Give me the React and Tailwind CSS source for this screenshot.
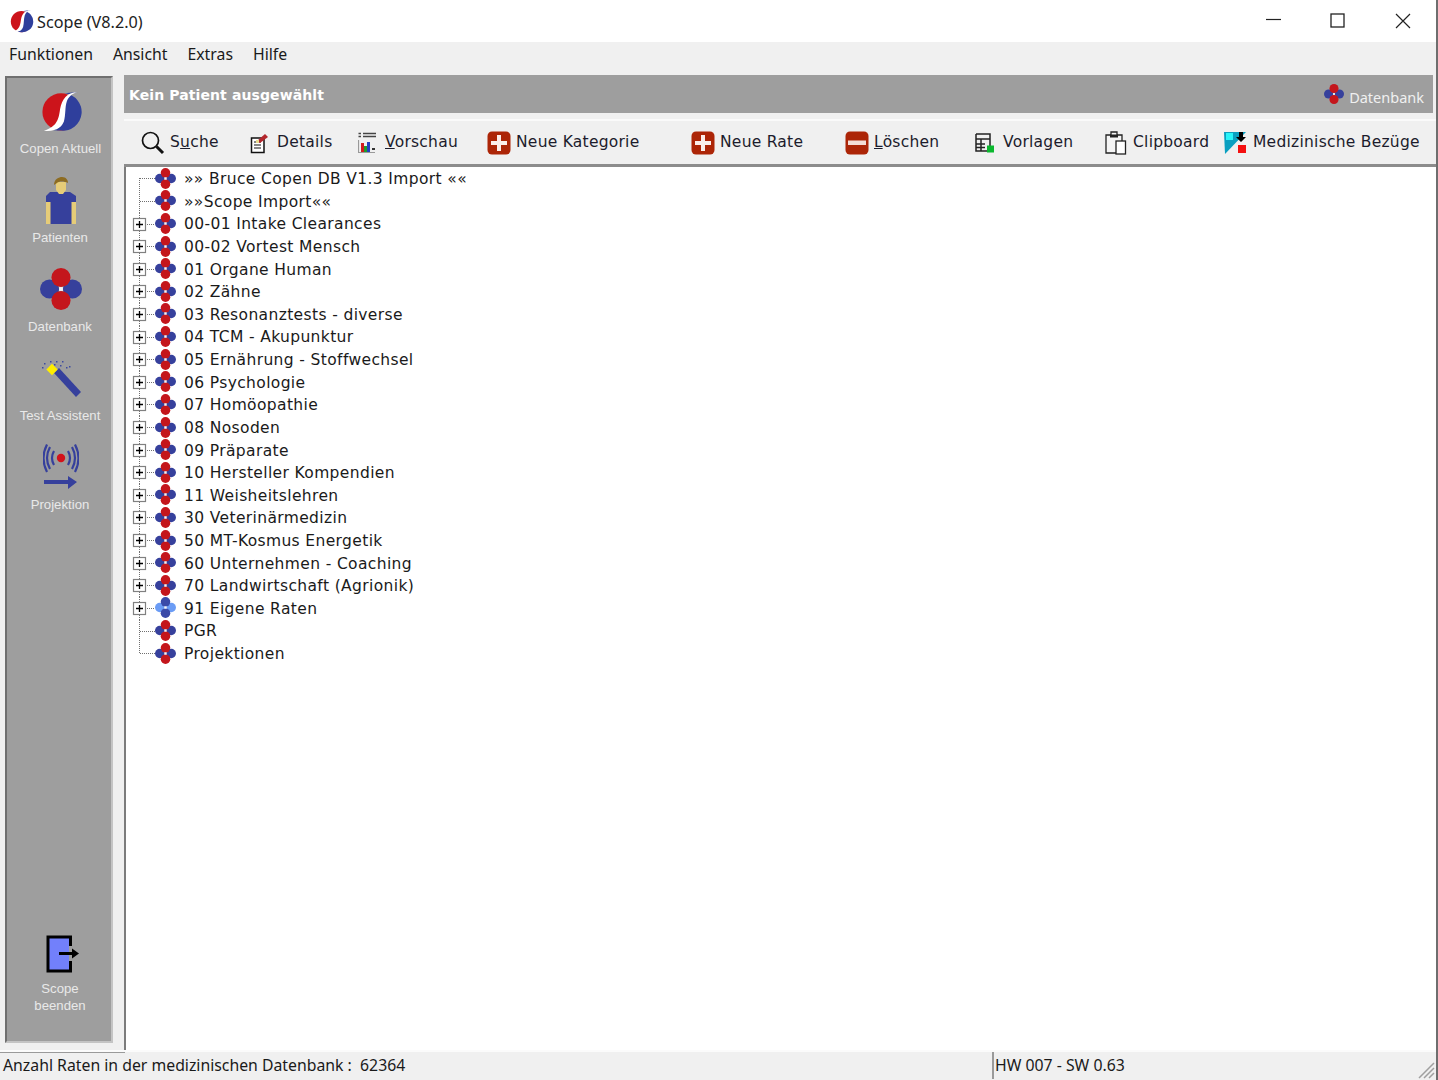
import React from 'react';

const treeRows = [
  { label: '»» Bruce Copen DB V1.3 Import ««', leaf: true, first: true },
  { label: '»»Scope Import««', leaf: true },
  { label: '00-01 Intake Clearances' },
  { label: '00-02 Vortest Mensch' },
  { label: '01 Organe Human' },
  { label: '02 Zähne' },
  { label: '03 Resonanztests - diverse' },
  { label: '04 TCM - Akupunktur' },
  { label: '05 Ernährung - Stoffwechsel' },
  { label: '06 Psychologie' },
  { label: '07 Homöopathie' },
  { label: '08 Nosoden' },
  { label: '09 Präparate' },
  { label: '10 Hersteller Kompendien' },
  { label: '11 Weisheitslehren' },
  { label: '30 Veterinärmedizin' },
  { label: '50 MT-Kosmus Energetik' },
  { label: '60 Unternehmen - Coaching' },
  { label: '70 Landwirtschaft (Agrionik)' },
  { label: '91 Eigene Raten', light: true },
  { label: 'PGR', leaf: true },
  { label: 'Projektionen', leaf: true, last: true },
];

const Clover = ({ size = 21, light = false, className = '' }) => (
  <svg width={size} height={size} viewBox="0 0 22 22" className={`shrink-0 ${className}`}>
    <circle cx="5" cy="11" r="5" fill={light ? '#6b9cf5' : '#36409c'} />
    <circle cx="17" cy="11" r="5" fill={light ? '#6b9cf5' : '#36409c'} />
    <circle cx="11" cy="5" r="5" fill={light ? '#3a4aa8' : '#c4161c'} />
    <circle cx="11" cy="17" r="5" fill={light ? '#3a4aa8' : '#c4161c'} />
    <rect x="10" y="10" width="2" height="2" fill="#f4f4f4" />
  </svg>
);

const LogoMark = ({ size }) => (
  <svg width={size} height={size} viewBox="0 0 44 44" className="shrink-0">
    <circle cx="21" cy="23" r="19.500" fill="#cc141b" />
    <path d="M25 3.500 A19.500 19.500 0 0 1 21 42.500 C16 42.500 12 42 10 41 C22 38 21 30 22 22 C23 12 26 5 38 2 Z" fill="#2f3f9c" />
    <path d="M38 2 C27 3 22 9 20 20 C18.500 31 17 38 3 43 C14 43 21 41 24 33 C26 26 25 18 27 12 C29 7 32 4 38 2 Z" fill="#fff" />
  </svg>
);

const PersonIcon = () => (
  <svg width="32" height="48" viewBox="0 0 32 48">
    <path d="M5 16 L25 16 L31 20 L31 48 L1 48 L1 20 Z" fill="#36409c" />
    <rect x="1" y="26" width="4.500" height="22" fill="#e6cc78" />
    <rect x="26.500" y="26" width="4.500" height="22" fill="#e6cc78" />
    <path d="M11 6 H21 V14 L18 18 H14 L11 14 Z" fill="#e6cc78" />
    <path d="M9 9 C9 3 14 1 17 1 C21 1 23 4 23 7 C19 5 14 5 12 7 Z" fill="#8d6c22" />
  </svg>
);

const WandIcon = () => (
  <svg width="42" height="42" viewBox="0 0 42 42">
    <path d="M13 12 L18 7 L40 31 L35 36 Z" fill="#36409c" />
    <rect x="7" y="4.500" width="8" height="8" transform="rotate(45 11 8.500)" fill="#ffee00" />
    <g fill="#3d4aa0">
      <rect x="3" y="2" width="1.500" height="1.500" />
      <rect x="9" y="0" width="1.500" height="1.500" />
      <rect x="15" y="0" width="1.500" height="1.500" />
      <rect x="21" y="0" width="1.500" height="1.500" />
      <rect x="19" y="4" width="1.500" height="1.500" />
      <rect x="25" y="6" width="1.500" height="1.500" />
      <rect x="13" y="3" width="1.500" height="1.500" />
      <rect x="1" y="6" width="1.500" height="1.500" />
      <rect x="28" y="5" width="1.500" height="1.500" />
    </g>
  </svg>
);

const ProjectionIcon = () => (
  <svg width="36" height="46" viewBox="0 0 36 46">
    <circle cx="18" cy="14" r="4.200" fill="#d3121a" />
    <g fill="none" stroke="#36409c" strokeWidth="2.200">
      <path d="M11 7 Q7 14 11 21" />
      <path d="M7 3 Q1 14 7 25" />
      <path d="M4 0.500 Q-3 14 4 28" />
      <path d="M25 7 Q29 14 25 21" />
      <path d="M29 3 Q35 14 29 25" />
      <path d="M32 0.500 Q39 14 32 28" />
    </g>
    <path d="M1 36 H25 V32 L34 38 L25 45 V40 H1 Z" fill="#36409c" />
  </svg>
);

const ExitIcon = () => (
  <svg width="34" height="38" viewBox="0 0 34 38">
    <path d="M2 2 H23 V36 H2 Z" fill="#7280fb" />
    <path d="M24.500 11 V2 H2 V36 H24.500 V26" fill="none" stroke="#000" strokeWidth="3" />
    <rect x="13" y="17" width="15" height="3" fill="#000" />
    <path d="M26 13.500 L33 18.500 L26 23.500 Z" fill="#000" />
  </svg>
);

const SearchIcon = () => (
  <svg width="24" height="24" viewBox="0 0 24 24" className="shrink-0">
    <circle cx="9.500" cy="9.500" r="8" fill="none" stroke="#111" strokeWidth="1.700" />
    <path d="M15.500 15.500 L22 22" stroke="#111" strokeWidth="3" />
  </svg>
);

const PlusSquare = ({ minus = false, fill = '#ac2507' }) => (
  <svg width="24" height="24" viewBox="0 0 24 24" className="shrink-0">
    <rect x="0.500" y="0.500" width="23" height="23" rx="4.500" fill={fill} />
    {minus ? (
      <rect x="3" y="9.500" width="18" height="4.500" fill="#f4ddd6" />
    ) : (
      <path d="M10 4 H14 V10 H20 V14 H14 V20 H10 V14 H4 V10 H10 Z" fill="#fbeeea" />
    )}
  </svg>
);

const DetailsIcon = () => (
  <svg width="20" height="22" viewBox="0 0 20 22" className="shrink-0">
    <path d="M1.500 6 H14 V20.500 H1.500 Z" fill="#fff" stroke="#111" strokeWidth="1.500" />
    <path d="M4 10 H11 M4 13 H11 M4 16 H11" stroke="#111" strokeWidth="1.200" />
    <path d="M7 9 L15 2 L18 5 L10 11 Z" fill="#b3262c" />
    <rect x="6" y="8" width="3" height="3" fill="#e9dc92" />
  </svg>
);

const PreviewIcon = () => (
  <svg width="20" height="22" viewBox="0 0 20 22" className="shrink-0">
    <path d="M0.500 1.500 H3 M5 1.500 H18 M0.500 4.500 H3 M5 4.500 H18" stroke="#444" strokeWidth="1.300" />
    <path d="M0.500 8 V20.500 H17" fill="none" stroke="#999" strokeWidth="1.200" />
    <rect x="3" y="11" width="3" height="9" fill="#d11c1c" />
    <rect x="6" y="14" width="3" height="6" fill="#1f9d2b" />
    <rect x="9" y="10" width="3" height="10" fill="#2340c0" />
    <rect x="14" y="16" width="3" height="2" fill="#333" />
  </svg>
);

const TemplateIcon = () => (
  <svg width="20" height="20" viewBox="0 0 20 20" className="shrink-0">
    <path d="M1 1 H15 V14 M1 1 V18 H12 M1 6 H15 M1 11 H10 M1 14.500 H10 M6 6 V18" fill="none" stroke="#222" strokeWidth="1.500" />
    <rect x="12" y="12.500" width="7" height="7" fill="#0ab82e" />
  </svg>
);

const ClipboardIcon = () => (
  <svg width="22" height="24" viewBox="0 0 22 24" className="shrink-0">
    <path d="M1 4 H6 V1 H12 V4 H17 V22 H1 Z" fill="#f5f5f5" stroke="#222" strokeWidth="1.300" />
    <rect x="5" y="3.500" width="8" height="3" fill="#222" />
    <rect x="11" y="10" width="9.500" height="13" fill="#fff" stroke="#222" strokeWidth="1.300" />
  </svg>
);

const ReferenceIcon = () => (
  <svg width="24" height="24" viewBox="0 0 24 24" className="shrink-0">
    <path d="M0 1 H22 L1 23 Z" fill="#0a9fc0" />
    <rect x="2" y="2" width="7" height="7" fill="#28f4f8" />
    <path d="M15 1 H19 V6 H22 L17 11 L12 6 H15 Z" fill="#000" />
    <rect x="14" y="14" width="8" height="8" fill="#f41010" />
  </svg>
);

const SideButton = ({ icon, label, iconClass, className }) => (
  <div className={`flex flex-col items-center text-[#e9e9e9] text-[13.2px] leading-[17px] font-['Liberation_Sans',sans-serif] ${className}`}>
    <div className={`flex items-center justify-center h-[58px] ${iconClass}`}>{icon}</div>
    {label}
  </div>
);

const ToolItem = ({ icon, width, gap = 'gap-[6px]', children }) => (
  <div className={`flex items-center shrink-0 ${gap} ${width}`}>
    {icon}
    <span className="whitespace-nowrap">{children}</span>
  </div>
);

const TreeLines = ({ leaf, first, last }) => (
  <svg width="29" height="23" viewBox="0 0 29 23" className="shrink-0 overflow-visible mb-[2px]">
    <path
      d={`M13.500 ${first ? 11 : 0} V${last ? 11 : 24}`}
      stroke="#707070"
      strokeWidth="1"
      strokeDasharray="1 1"
      fill="none"
    />
    <path d={`M${leaf ? 14 : 19} 11.500 H29`} stroke="#707070" strokeWidth="1" strokeDasharray="1 1" fill="none" />
    {!leaf && (
      <g>
        <rect x="7.500" y="5.500" width="12" height="12" fill="#fff" stroke="#808080" strokeWidth="1.200" />
        <path d="M10 11.500 H17 M13.500 8 V15" stroke="#000" strokeWidth="1.300" />
      </g>
    )}
  </svg>
);

export default function App() {
  return (
    <div className="w-[1438px] h-[1080px] flex flex-col overflow-hidden bg-[#f0f0f0] text-black border-r-2 border-[#6e6e6e]">
      {/* title bar */}
      <div className="h-[42px] shrink-0 bg-white flex items-center pl-[10px] font-['Noto_Sans',sans-serif] text-[16.2px] text-[#222]">
        <LogoMark size={24} />
        <span className="ml-[3px] pt-[2px]">Scope (V8.2.0)</span>
        <div className="ml-auto flex items-center">
          <svg width="16" height="16" viewBox="0 0 16 16" className="mr-[48px]">
            <path d="M0 6.500 H15" stroke="#222" strokeWidth="1.200" />
          </svg>
          <svg width="16" height="16" viewBox="0 0 16 16" className="mr-[49px]">
            <rect x="1" y="1" width="13" height="13" fill="none" stroke="#222" strokeWidth="1.300" />
          </svg>
          <svg width="16" height="16" viewBox="0 0 16 16" className="mr-[25px]">
            <path d="M1 1 L15 15 M15 1 L1 15" stroke="#222" strokeWidth="1.200" />
          </svg>
        </div>
      </div>

      {/* menu */}
      <div className="h-[26px] shrink-0 flex items-center gap-[20px] pl-[9px] font-['Noto_Sans',sans-serif] text-[15.8px] text-[#1a1a1a]">
        <span>Funktionen</span>
        <span>Ansicht</span>
        <span>Extras</span>
        <span>Hilfe</span>
      </div>

      <div className="flex-1 min-h-0 flex">
        {/* sidebar */}
        <div className="w-[124px] shrink-0 pt-[8px] pl-[5px] pb-[7px]">
          <div className="w-[108px] h-full flex flex-col bg-[#9e9e9e] border-2 border-t-[#6f6f6f] border-l-[#6f6f6f] border-r-[#c4c4c4] border-b-[#c4c4c4]">
            <SideButton className="h-[89px] pt-[4px] pl-[3px]" iconClass="ml-[2px]" icon={<LogoMark size={42} />} label="Copen Aktuell" />
            <SideButton className="h-[89px] pt-[4px] pl-[2px]" iconClass="ml-[2px]" icon={<PersonIcon />} label="Patienten" />
            <SideButton className="h-[89px] pt-[4px] pl-[2px]" iconClass="ml-[1px]" icon={<Clover size={42} />} label="Datenbank" />
            <SideButton className="h-[89px] pt-[4px] pl-[2px]" iconClass="ml-[3px] mt-[4px] -mb-[4px]" icon={<WandIcon />} label="Test Assistent" />
            <SideButton className="h-[89px] pt-[4px] pl-[2px]" iconClass="ml-[1px]" icon={<ProjectionIcon />} label="Projektion" />
            <SideButton
              className="mt-auto mb-[27px] pl-[2px]"
              iconClass="ml-[6px] mt-[3px] -mb-[3px]"
              icon={<ExitIcon />}
              label={
                <span className="text-center block">
                  Scope
                  <br />
                  beenden
                </span>
              }
            />
          </div>
        </div>

        {/* main */}
        <div className="flex-1 min-w-0 flex flex-col pt-[7px]">
          <div className="h-[38px] shrink-0 mr-[3px] bg-[#9e9e9e] flex items-center justify-between pl-[5px] pr-[9px] text-white">
            <span className="font-['DejaVu_Sans',sans-serif] font-bold text-[14px] tracking-[0.1px] pt-[3px]">Kein Patient ausgewählt</span>
            <div className="flex items-center gap-[5px] font-['Noto_Sans',sans-serif] text-[14.5px] text-[#f0f0f0]">
              <Clover size={20} />
              <span className="pt-[7px]">Datenbank</span>
            </div>
          </div>

          <div className="h-[6px] shrink-0" />
          <div className="h-[48px] shrink-0 border-t-2 border-[#fafafa] border-b-[3px] border-b-[#8c8c8c] flex items-center pl-[17px] pt-[1px] font-['DejaVu_Sans',sans-serif] text-[15.5px] tracking-[0.25px] text-[#1c1c2c]">
            <ToolItem width="w-[109px]" gap="gap-[5px]" icon={<SearchIcon />}>
              <span>S</span>
              <span className="underline">u</span>che
            </ToolItem>
            <ToolItem width="w-[108px]" gap="gap-[7px]" icon={<DetailsIcon />}>
              Details
            </ToolItem>
            <ToolItem width="w-[129px]" gap="gap-[7px]" icon={<PreviewIcon />}>
              <span className="underline">V</span>orschau
            </ToolItem>
            <ToolItem width="w-[204px]" gap="gap-[5px]" icon={<PlusSquare />}>
              Neue Kategorie
            </ToolItem>
            <ToolItem width="w-[154px]" gap="gap-[5px]" icon={<PlusSquare />}>
              Neue Rate
            </ToolItem>
            <ToolItem width="w-[130px]" gap="gap-[5px]" icon={<PlusSquare minus />}>
              <span className="underline">L</span>öschen
            </ToolItem>
            <ToolItem width="w-[130px]" gap="gap-[8px]" icon={<TemplateIcon />}>
              Vorlagen
            </ToolItem>
            <ToolItem width="w-[119px]" gap="gap-[6px]" icon={<ClipboardIcon />}>
              Clipboard
            </ToolItem>
            <ToolItem width="w-[200px]" gap="gap-[5px]" icon={<ReferenceIcon />}>
              Medizinische Bezüge
            </ToolItem>
          </div>

          {/* tree */}
          <div className="flex-1 min-h-0 bg-white border-l-2 border-[#7c7c7c] pt-[1.5px] font-['DejaVu_Sans',sans-serif] text-[15.5px] tracking-[0.37px] text-[#1a1a1a]">
            {treeRows.map((row) => (
              <div key={row.label} className="h-[22.62px] flex items-center whitespace-nowrap">
                <TreeLines leaf={row.leaf} first={row.first} last={row.last} />
                <Clover size={21} light={row.light} className="mb-[3px]" />
                <span className="ml-[8px]">{row.label}</span>
              </div>
            ))}
          </div>
        </div>
      </div>

      {/* status bar */}
      <div className="h-[30px] shrink-0 border-t-2 border-[#fbfbfb] flex items-center pb-[1px] font-['Noto_Sans',sans-serif] text-[15.8px] text-[#1a1a1a]">
        <div className="relative w-[992px] h-full flex items-center pl-[3px] whitespace-pre">
          <div className="absolute top-0 left-0 w-[125px] h-px bg-[#9a9a9a]" />
          Anzahl Raten in der medizinischen Datenbank :  62364
        </div>
        <div className="flex-1 h-full flex items-center pl-[1px] border-l-2 border-[#9a9a9a]">HW 007 - SW 0.63</div>
        <svg width="18" height="18" viewBox="0 0 18 18" className="mr-[1px] self-end">
          <path d="M2 17 L17 2 M7 17 L17 7 M12 17 L17 12" stroke="#a0a0a0" strokeWidth="1.500" />
        </svg>
      </div>
    </div>
  );
}
